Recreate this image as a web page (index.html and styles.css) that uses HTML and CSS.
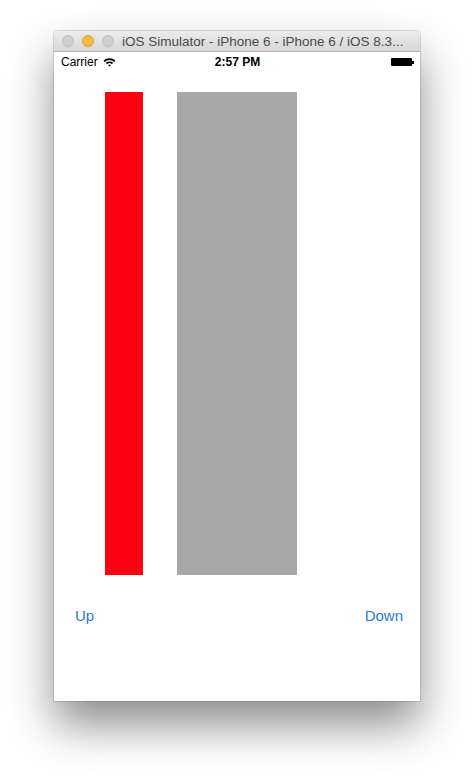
FILE: index.html
```html
<!DOCTYPE html>
<html>
<head>
<meta charset="utf-8">
<link rel="stylesheet" href="styles.css">
</head>
<body>
<div class="window">
  <div class="titlebar">
    <div class="lights">
      <span class="light gray"></span>
      <span class="light orange"></span>
      <span class="light gray"></span>
    </div>
    <div class="title">iOS Simulator - iPhone 6 - iPhone 6 / iOS 8.3...</div>
  </div>
  <div class="screen">
    <div class="status">
      <div class="carrier">Carrier
        <svg class="wifi" width="13" height="10" viewBox="0 0 12 9">
          <path d="M0.5 3.2 A8 8 0 0 1 11.5 3.2 L10.3 4.4 A6.3 6.3 0 0 0 1.7 4.4 Z" fill="#000"/>
          <path d="M2.6 5.3 A5 5 0 0 1 9.4 5.3 L8.2 6.5 A3.3 3.3 0 0 0 3.8 6.5 Z" fill="#000"/>
          <path d="M4.7 7.4 A2 2 0 0 1 7.3 7.4 L6 8.7 Z" fill="#000"/>
        </svg>
      </div>
      <div class="time">2:57 PM</div>
      <div class="battery"><span class="cell"></span><span class="nub"></span></div>
    </div>
    <div class="bars">
      <div class="bar red"></div>
      <div class="bar grey"></div>
    </div>
    <div class="buttons">
      <span class="btn">Up</span>
      <span class="btn">Down</span>
    </div>
  </div>
</div>
</body>
</html>
```
FILE: styles.css
```css
html, body {
  margin: 0;
  padding: 0;
  background: #ffffff;
}
body {
  width: 474px;
  height: 779px;
  overflow: hidden;
  font-family: "Liberation Sans", Arial, sans-serif;
}
.window {
  margin: 31px 0 0 54px;
  width: 366px;
  height: 670px;
  display: flex;
  flex-direction: column;
  box-shadow: 0 24px 45px rgba(0,0,0,0.45), 0 0 0 1px rgba(0,0,0,0.12);
  border-radius: 4px 4px 0 0;
  background: #fff;
}
.titlebar {
  height: 21px;
  flex: none;
  display: flex;
  align-items: center;
  background: linear-gradient(#ececec, #d6d6d6);
  border-bottom: 1px solid #b5b5b5;
  border-radius: 4px 4px 0 0;
  box-sizing: border-box;
}
.lights {
  display: flex;
  gap: 8px;
  margin-left: 8px;
}
.light {
  width: 12px;
  height: 12px;
  border-radius: 50%;
  box-sizing: border-box;
}
.light.gray {
  background: #d0d0d0;
  border: 1px solid #bcbcbc;
}
.light.orange {
  background: #fdbc40;
  border: 1px solid #e0a030;
}
.title {
  margin-left: 8px;
  font-size: 13.5px;
  color: #4a4a4a;
  white-space: nowrap;
}
.screen {
  flex: 1;
  display: flex;
  flex-direction: column;
  background: #fff;
}
.status {
  height: 20px;
  display: flex;
  align-items: center;
  justify-content: space-between;
  padding: 0 6px 0 7px;
  font-size: 12px;
  color: #000;
}
.carrier {
  display: flex;
  align-items: center;
  gap: 5px;
  width: 120px;
}
.time {
  font-weight: bold;
}
.battery {
  width: 120px;
  display: flex;
  justify-content: flex-end;
  align-items: center;
}
.cell {
  width: 21px;
  height: 8px;
  background: #000;
  border-radius: 1px;
}
.nub {
  width: 1.5px;
  height: 3px;
  background: #000;
}
.bars {
  display: flex;
  gap: 34px;
  margin: 20px 0 0 51px;
}
.bar {
  height: 483px;
}
.bar.red {
  width: 38px;
  background: #ff0013;
}
.bar.grey {
  width: 120px;
  background: #a8a8a8;
}
.buttons {
  display: flex;
  justify-content: space-between;
  padding: 0 17px 0 21px;
  margin-top: 32px;
}
.btn {
  font-size: 15px;
  color: #2a7ad0;
}
```
